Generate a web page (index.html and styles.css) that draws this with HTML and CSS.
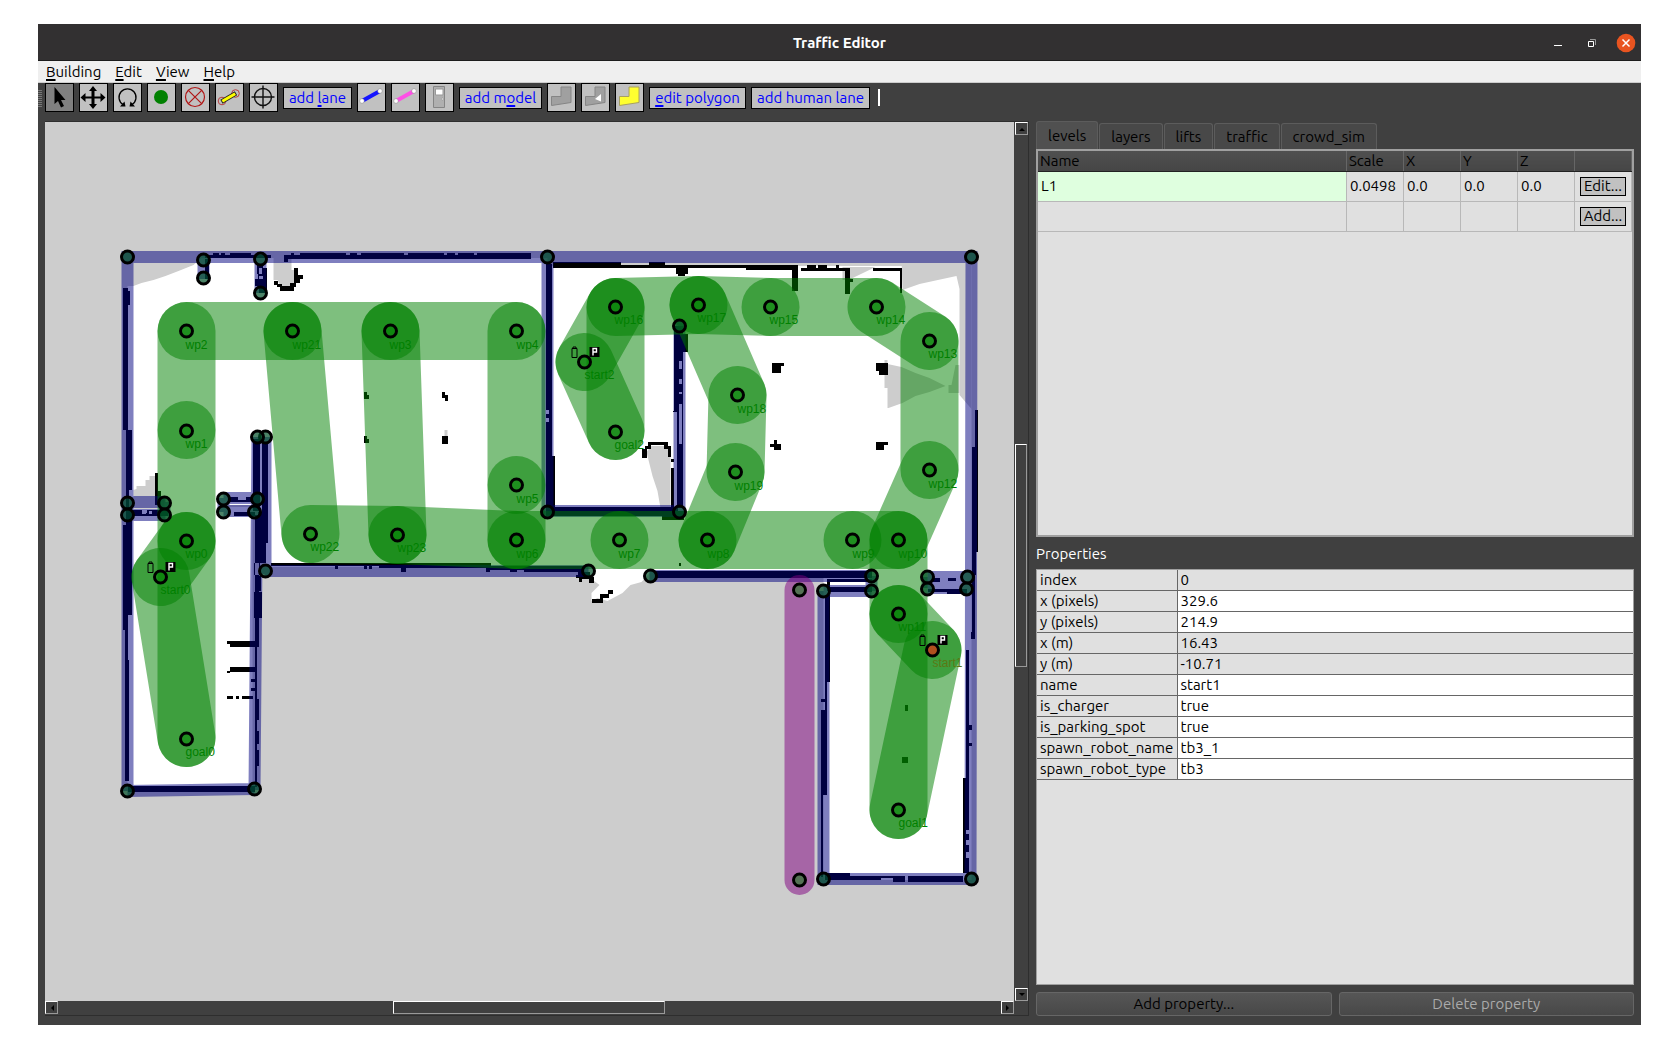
FILE: index.html
```html
<!DOCTYPE html>
<html lang="en">
<head>
<meta charset="utf-8">
<title>Traffic Editor</title>
<link rel="stylesheet" href="styles.css">
</head>
<body>
<div class="window">
  <header class="titlebar">
    <h1 class="title">Traffic Editor</h1>
    <div class="window-controls">
      <button class="control" aria-label="Minimize"><svg width="20" height="20" viewBox="0 0 20 20"><path d="M6 12.500h8" stroke="#fff"/></svg></button>
      <button class="control" aria-label="Restore"><svg width="20" height="20" viewBox="0 0 20 20" fill="none"><path d="M6.500 8.500h5v5h-5z" stroke="#fff"/><path d="M8 6.500h5.500v5.500" stroke="#999"/></svg></button>
      <button class="control" aria-label="Close"><svg width="20" height="20" viewBox="0 0 20 20"><circle cx="10" cy="10" r="9.300" fill="#e95420"/><path d="M6.500 6.500l7 7m0-7l-7 7" stroke="#fff" stroke-width="1.500"/></svg></button>
    </div>
  </header>
  <nav class="menubar">
    <button class="menu"><u>B</u>uilding</button>
    <button class="menu"><u>E</u>dit</button>
    <button class="menu"><u>V</u>iew</button>
    <button class="menu"><u>H</u>elp</button>
  </nav>
  <div class="toolbar" role="toolbar">
    <span class="grip"></span>
    <button class="tool active" aria-label="Select"><svg viewBox="0 0 27 27"><path d="M8.500 3v17l3.500-3 3 6.500 3-1.500-3-6h4.500z"/></svg></button>
    <button class="tool" aria-label="Move"><svg viewBox="0 0 27 27"><path d="M13 2l4 5h-2.500v5.500h6V9l5 4.500-5 4.500v-3.500h-6V20H17l-4 5-4-5h2.500v-5.500h-6V18l-5-4.500 5-4.500v3.500h6V7H9z"/></svg></button>
    <button class="tool" aria-label="Rotate"><svg viewBox="0 0 27 27"><path d="M9 20.500a8.500 8.500 0 1 1 9 0" fill="none" stroke="#000" stroke-width="1.300"/><path d="M6 22.500l5.500 0-1-5zM21 22.500l-5.500 0 1-5z"/></svg></button>
    <button class="tool" aria-label="Add vertex"><svg viewBox="0 0 27 27"><circle cx="13" cy="13" r="7" fill="#008000"/></svg></button>
    <button class="tool" aria-label="Delete"><svg viewBox="0 0 27 27" fill="none" stroke="#b01515" stroke-width="1.200"><circle cx="13" cy="13" r="9.500"/><path d="M6.300 6.300l13.400 13.400m0-13.400L6.300 19.700"/></svg></button>
    <button class="tool" aria-label="Add fiducial"><svg viewBox="0 0 27 27"><g fill="none" stroke="#b84040"><circle cx="6" cy="17" r="3.800"/><circle cx="19.500" cy="9.500" r="3.800"/></g><path d="M5.500 17.800L20 9.200" stroke="#222" stroke-width="4.500"/><path d="M6.300 17.300L19.200 9.700" stroke="#ff0" stroke-width="3"/></svg></button>
    <button class="tool" aria-label="Add constraint"><svg viewBox="0 0 27 27" fill="none" stroke="#111" stroke-width="1.400"><circle cx="13" cy="13" r="8.500"/><path d="M13 1.500v23M1.500 13h23"/></svg></button>
    <button class="text-tool">add <u>l</u>ane</button>
    <button class="tool" aria-label="Add wall"><svg viewBox="0 0 27 27"><path d="M4 17L22 7" stroke="#1414ff" stroke-width="4"/><g fill="#fff" stroke="#888" stroke-width=".500"><circle cx="4" cy="17" r="2.300"/><circle cx="22" cy="7" r="2.300"/></g></svg></button>
    <button class="tool" aria-label="Add measurement"><svg viewBox="0 0 27 27"><path d="M4 17L22 7" stroke="#ff50e6" stroke-width="4"/><g fill="#fff" stroke="#888" stroke-width=".500"><circle cx="4" cy="17" r="2.300"/><circle cx="22" cy="7" r="2.300"/></g></svg></button>
    <button class="tool" aria-label="Add door"><svg viewBox="0 0 27 27"><path d="M7.500 2.500h11v21h-11z" fill="#b0b0b0" stroke="#858585"/><path d="M9.500 5h7.500v6h-7.500z" fill="#fff" stroke="#999"/><circle cx="16.500" cy="15" r="1" fill="#eee" stroke="#888" stroke-width=".500"/></svg></button>
    <button class="text-tool wide">add m<u>o</u>del</button>
    <button class="tool" aria-label="Add floor"><svg viewBox="0 0 27 27"><path d="M3.500 12.500h9.500V3h10v15.500L3.500 21.500z" fill="#a0a0a0" stroke="#858585"/></svg></button>
    <button class="tool" aria-label="Add hole"><svg viewBox="0 0 27 27"><path d="M3.500 12.500h9.500V3h10v15.500L3.500 21.500z" fill="#a0a0a0" stroke="#858585"/><path d="M13 15l6-5v7.500z" fill="#fff"/></svg></button>
    <button class="tool" aria-label="Add zone"><svg viewBox="0 0 27 27"><path d="M3.500 12.500h9.500V3h10v15.500L3.500 21.500z" fill="#ffff30" stroke="#a8a060"/></svg></button>
    <button class="text-tool wider"><u>e</u>dit polygon</button>
    <button class="text-tool widest">add human lane</button>
    <span class="caret"></span>
  </div>
  <main class="workspace">
    <section class="viewport" aria-label="Map">
      <svg class="map" viewBox="46 122 968 879">
        <defs>
          <circle id="node" r="6"/>
          <g id="parking"><path d="M5-15h10v10H5z"/><path d="M8.500-6.500v-7h3.500v3.500H8.500" fill="none" stroke="#fff" stroke-width="1.400"/></g>
          <path id="battery" d="M-12.500-13.500h5v9h-5zM-11.500-13.500v-1.500h3v1.500" fill="none" stroke="#000"/>
        </defs>
        <g class="floor">
          <path d="M128 286h6l8-3 12-3 12-4 13-5 15-6 8-7H972V880H824V571H652l-10 11-11 3-8 8-15 8-10-3-6 3v-8l8-8-12-9-4-9H265V515h-12v271H128z"/>
        </g>
        <g class="unknown">
          <path d="M274 258h18v12h4v10l-4 8h-10l-4-8h-4z"/>
          <path d="M647 452l5-6h14l5 6v56h-10l-3-17-5-15z"/>
          <path d="M885 360h3v4l14 3 14 6 14 5 16 8-16 6-14 4-13 7-14 5h-1v-20h-3zM956 365h4v28h-11v-8h3z"/>
          <path d="M445 430h3v7h-3zM876 267l-27 13h-6v-13zM902 258h70v151l-12-14V289l-3-13-14 3-23 5-17 6z"/>
          <path d="M548 257h424v9H548zM134 490l3-1v-3h9v-6h4v-4h7v22h-23z"/>
          <path d="M128 497h37v12h-37zM224 505h30v2h-30z"/>
        </g>
        <g class="scan">
          <path d="M205 255h8v-2h6v2h2v-2h4v2h5v-2h21v2h20v3h-66zM284 255h7v-2h3v2h6v-2h46v2h4v-2h7v2h4v-2h43v2h4v-2h36v2h3v-2h8v2h3v-2h16v2h3v-2h54v6H288v3h-3z"/>
          <path d="M123 288h5v3h2v14h-2v125h4v60h-3v19h1v3h3v3h-1v100h-4v45h1v121h-4V630h-2V525h3v-95h-3z"/>
          <path d="M205 259h4v20h-4zM257 264h6v4h4v25h-8v-7h-4v-7h3v-5h-1zM295 268h3v7h5v4h-3v4h-4v4h-2v4h-14v-4h-3v-2h-3v-4h4v3h4v2h8v-3h4z"/>
          <path d="M442 392h3v3h3v6h-3v-3h-3zM364 392h3v3h2v4h-5zM364 436h3v3h2v4h-5zM442 436h6v8h-6zM155 473h3v18h3v14h-6z"/>
          <path d="M253 439h7v72h-7zM262 442h6v101h-2v20h-8v-51h4zM255 515h4v125h-4zM254 575h6v-12h-6z"/>
          <path d="M255 576h6v15h-6zM254 592h8v26h-8zM255 634h4v13h-4zM255 647h2v140h-2zM251 679h4v3h-4zM251 688h4v3h-4zM256 699h3v21h-3zM256 731h3v13h-3zM256 750h3v16h-3z"/>
          <path d="M130 510h12v3h5v-3h21v6h-38zM230 497h8v3h8v-3h8v5h-24zM234 512h21v4h-21z"/>
          <path d="M271 563h220v3h93v6h-60v-2h-7v2h-7v-2h-20v2h-4v-4h-80v4h-5v-4h-22v-2H271zM335 566h3v3h-3zM364 566h3v3h-3zM369 566h3v3h-3z"/>
          <path d="M227 641h29v6h-26v-3h-3zM227 671h3v-4h25v5h-25v1h-3zM227 696h6v3h-6zM236 696h3v3h-3zM242 696h11v3h-11z"/>
          <path d="M128 786h127v6H128z"/>
          <path d="M546 264h6v192h3v51h123v9H546zM553 262h68v3h28v-3h16v3h132v5h-51v-2H553zM676 267h12v7h-3v2h-7v-2h-2zM792 265h6v26h-6zM801 268h6v-3h9v3h2v-3h9v3h9v-3h3v3h11v26h-5v-23h-44zM850 279h3v3h-3zM873 268h29v25h-2v-22h-27z"/>
          <path d="M675 326h8v182h-6V412h-3zM683 334h5v18h-5zM642 458v-9h3v-3h3v-4h20v4h3v11h-3v-8h-4v-4h-13v4h-4v9zM671 468h3v44h-3zM671 459h3v3h-3z"/>
          <path d="M772 363h12v3h-3v7h-9zM876 363h12v12h-9v-4h-3zM770 444h4v-4h3v4h4v6h-7v-3h-4zM876 442h12v3h-4v5h-8zM662 511h22v9h-22z"/>
          <path d="M975 410h3v133h-3zM972 447h4v128h-4zM976 543h2v9h-2z"/>
          <path d="M578 572h12v5h4v6h-5v-4h-7v3h-3v-4h-3v-3h2zM608 590h5v4h-4v4h-6v5h-11v-4h8v-5h8z"/>
          <path d="M656 571h216v7H656zM827 579h45v3h-42v9h-3zM828 587h44v5h-44zM932 578h8v4h-8zM948 578h8v3h-8zM928 589h39v5h-20v-2h-19z"/>
          <path d="M825 595h5v87h-3v113h-4v82h-2V710h4zM966 650h3v223h-3zM963 778h4v95h-4zM825 873h25v3h55v6h-12v-4h-12v2h-56zM895 876h9v3h-9zM908 876h55v6h-55zM972 575h3v58h-3z"/>
          <path d="M905 705h3v6h-3zM902 757h6v6h-6zM679 563h2v3h-2zM969 725h3v5h-3zM969 743h3v3h-3zM971 632h4v7h-4zM821 699h4v3h-4z"/>
        </g>
        <g class="specks">
          <path d="M259 268h3v6h-3zM259 276h4v3h-4zM546 410h3v4h-3zM546 418h3v4h-3zM679 361h3v8h-3zM679 379h3v5h-3zM679 392h3v2h-3zM679 404h3v40h-3zM142 511h4v3h-4zM149 511h3v3h-3zM966 830h3v4h-3zM966 840h3v5h-3zM966 852h3v6h-3z"/>
        </g>
        <g class="walls">
          <path d="M122 257h856M128 257v534M204 257v22M261 257v36M548 257v255M542 511h144M680 512V326M972 257l-1 628M128 502h38M128 515h38M165 502v14M224 498h34M224 511h31M224 498v14M258 437l-3 353M266 437v137M265 571h324M128 791l127-2M650 576h222M872 576v15M872 591h-48M824 591v294M824 879h148M928 577h40M928 588h40M928 577v11"/>
        </g>
        <path class="measure" d="M800 590v290"/>
        <g class="lanes">
          <path d="M187 331H293"/><path d="M293 331H391"/><path d="M391 331H517"/>
          <path d="M187 331V430"/><path d="M187 430V541"/><path d="M187 541L161 577"/><path d="M161 577L187 738"/><path d="M187 541V738"/>
          <path d="M293 331L311 534"/><path d="M391 331L398 535"/><path d="M517 331V485"/><path d="M517 485V540"/>
          <path d="M311 534L398 535"/><path d="M398 535L517 540"/><path d="M517 540H620"/><path d="M620 540H708"/><path d="M708 540H853"/><path d="M853 540H899"/>
          <path d="M899 540V614"/><path d="M899 540L930 470"/><path d="M930 470V341"/><path d="M930 341L877 307"/><path d="M877 307H771"/><path d="M771 307L699 305"/><path d="M699 305L616 307"/>
          <path d="M699 305L738 395"/><path d="M738 395L736 472"/><path d="M736 472L708 540"/>
          <path d="M616 307L585 362"/><path d="M585 362L616 431"/><path d="M616 307V431"/>
          <path d="M899 614L933 650"/><path d="M933 650L899 810"/><path d="M899 614V810"/>
        </g>
        <g class="corners">
          <use href="#node" x="128" y="257"/><use href="#node" x="204" y="260"/><use href="#node" x="204" y="278"/><use href="#node" x="261" y="259"/><use href="#node" x="261" y="293"/><use href="#node" x="548" y="257"/><use href="#node" x="972" y="257"/>
          <use href="#node" x="266" y="437"/><use href="#node" x="258" y="437"/><use href="#node" x="128" y="503"/><use href="#node" x="128" y="515"/><use href="#node" x="165" y="503"/><use href="#node" x="165" y="515"/>
          <use href="#node" x="224" y="499"/><use href="#node" x="224" y="512"/><use href="#node" x="258" y="499"/><use href="#node" x="255" y="512"/><use href="#node" x="548" y="512"/><use href="#node" x="680" y="512"/><use href="#node" x="680" y="326"/>
          <use href="#node" x="266" y="571"/><use href="#node" x="589" y="571"/><use href="#node" x="651" y="576"/><use href="#node" x="128" y="791"/><use href="#node" x="255" y="789"/>
          <use href="#node" x="824" y="591"/><use href="#node" x="872" y="576"/><use href="#node" x="872" y="591"/><use href="#node" x="928" y="577"/><use href="#node" x="928" y="589"/><use href="#node" x="968" y="577"/><use href="#node" x="967" y="589"/><use href="#node" x="824" y="879"/><use href="#node" x="972" y="879"/>
          <use href="#node" class="measure-end" x="800" y="590"/><use href="#node" class="measure-end" x="800" y="880"/>
        </g>
        <g class="waypoints">
          <use href="#node" x="187" y="331"/><use href="#node" x="293" y="331"/><use href="#node" x="391" y="331"/><use href="#node" x="517" y="331"/><use href="#node" x="187" y="431"/><use href="#node" x="517" y="485"/><use href="#node" x="311" y="534"/><use href="#node" x="398" y="535"/><use href="#node" x="517" y="540"/><use href="#node" x="187" y="541"/><use href="#node" x="161" y="577"/><use href="#node" x="187" y="739"/>
          <use href="#node" x="616" y="307"/><use href="#node" x="699" y="305"/><use href="#node" x="771" y="307"/><use href="#node" x="877" y="307"/><use href="#node" x="930" y="341"/><use href="#node" x="585" y="362"/><use href="#node" x="616" y="432"/><use href="#node" x="738" y="395"/><use href="#node" x="736" y="472"/><use href="#node" x="930" y="470"/><use href="#node" x="620" y="540"/><use href="#node" x="708" y="540"/><use href="#node" x="853" y="540"/><use href="#node" x="899" y="540"/><use href="#node" x="899" y="614"/><use href="#node" x="899" y="810"/>
          <use href="#node" class="selected" x="933" y="650"/>
        </g>
        <use href="#battery" x="161" y="577"/><use href="#parking" x="161" y="577"/>
        <use href="#battery" x="585" y="362"/><use href="#parking" x="585" y="362"/>
        <use href="#battery" x="933" y="650"/><use href="#parking" x="933" y="650"/>
        <g class="labels">
          <text x="186" y="349">wp2</text><text x="293" y="349">wp21</text><text x="390" y="349">wp3</text><text x="517" y="349">wp4</text><text x="186" y="448">wp1</text><text x="517" y="503">wp5</text><text x="311" y="551">wp22</text><text x="398" y="552">wp23</text><text x="517" y="558">wp6</text><text x="186" y="558">wp0</text><text x="161" y="594">start0</text><text x="186" y="756">goal0</text>
          <text x="615" y="324">wp16</text><text x="698" y="322">wp17</text><text x="770" y="324">wp15</text><text x="877" y="324">wp14</text><text x="929" y="358">wp13</text><text x="585" y="379">start2</text><text x="615" y="449">goal2</text><text x="738" y="413">wp18</text><text x="735" y="490">wp19</text><text x="929" y="488">wp12</text><text x="619" y="558">wp7</text><text x="708" y="558">wp8</text><text x="853" y="558">wp9</text><text x="899" y="558">wp10</text><text x="899" y="631">wp11</text><text x="899" y="827">goal1</text>
          <text class="selected-label" x="933" y="667">start1</text>
        </g>
      </svg>
      <div class="scrollbar vertical">
        <button class="arrow" aria-label="Scroll up"><svg width="8" height="4" viewBox="0 0 8 4"><path d="M1 4l3-3 3 3z"/></svg></button>
        <div class="track"><span class="thumb"></span></div>
        <button class="arrow" aria-label="Scroll down"><svg width="8" height="4" viewBox="0 0 8 4"><path d="M1 0l3 3 3-3z"/></svg></button>
      </div>
      <div class="scrollbar horizontal">
        <button class="arrow" aria-label="Scroll left"><svg width="4" height="8" viewBox="0 0 4 8"><path d="M4 1L1 4l3 3z"/></svg></button>
        <div class="track"><span class="thumb"></span></div>
        <button class="arrow" aria-label="Scroll right"><svg width="4" height="8" viewBox="0 0 4 8"><path d="M0 1l3 3-3 3z"/></svg></button>
      </div>
    </section>
    <aside class="side">
      <div class="tabs" role="tablist">
        <button class="tab current" role="tab" aria-selected="true">levels</button>
        <button class="tab" role="tab">layers</button>
        <button class="tab" role="tab">lifts</button>
        <button class="tab" role="tab">traffic</button>
        <button class="tab" role="tab">crowd_sim</button>
      </div>
      <div class="pane levels-pane">
        <table class="levels">
          <colgroup><col><col class="num"><col class="num"><col class="num"><col class="num"><col class="num"></colgroup>
          <thead><tr><th>Name</th><th>Scale</th><th>X</th><th>Y</th><th>Z</th><th></th></tr></thead>
          <tbody>
            <tr><td class="active-level">L1</td><td>0.0498</td><td>0.0</td><td>0.0</td><td>0.0</td><td class="action"><button class="cell-button">Edit...</button></td></tr>
            <tr><td></td><td></td><td></td><td></td><td></td><td class="action"><button class="cell-button">Add...</button></td></tr>
          </tbody>
        </table>
      </div>
      <h2 class="heading">Properties</h2>
      <div class="pane properties-pane">
        <table class="properties">
          <colgroup><col class="key"><col></colgroup>
          <tbody>
            <tr><th scope="row">index</th><td class="locked">0</td></tr>
            <tr><th scope="row">x (pixels)</th><td>329.6</td></tr>
            <tr><th scope="row">y (pixels)</th><td>214.9</td></tr>
            <tr><th scope="row">x (m)</th><td class="locked">16.43</td></tr>
            <tr><th scope="row">y (m)</th><td class="locked">-10.71</td></tr>
            <tr><th scope="row">name</th><td>start1</td></tr>
            <tr><th scope="row">is_charger</th><td>true</td></tr>
            <tr><th scope="row">is_parking_spot</th><td>true</td></tr>
            <tr><th scope="row">spawn_robot_name</th><td>tb3_1</td></tr>
            <tr><th scope="row">spawn_robot_type</th><td>tb3</td></tr>
          </tbody>
        </table>
      </div>
      <div class="actions">
        <button class="action-button">Add property...</button>
        <button class="action-button" disabled>Delete property</button>
      </div>
    </aside>
  </main>
</div>
</body>
</html>
```
FILE: styles.css
```css
* { box-sizing: border-box; }

body {
  margin: 0;
  padding: 24px 39px 25px 38px;
  height: 100vh;
  background: #fff;
  font: 15px/20px Ubuntu, "Noto Sans", sans-serif;
  color: #000;
}

button {
  margin: 0;
  padding: 0;
  border: 0;
  background: none;
  font: inherit;
  color: inherit;
  white-space: nowrap;
}

svg { display: block; }
u { text-decoration-thickness: 2px; text-underline-offset: 2px; }

.window {
  display: flex;
  flex-direction: column;
  height: 100%;
  background: #404040;
}

.titlebar {
  display: grid;
  grid-template-columns: 1fr auto 1fr;
  align-items: center;
  height: 37px;
  padding: 1px 5px 0;
  background: #323031;
  border-bottom: 1px solid #1c1c1c;
  color: #fff;
}
.title { grid-column: 2; margin: 0; font-size: 15px; font-weight: 700; }
.window-controls { display: flex; justify-content: flex-end; gap: 14px; }

.menubar {
  display: flex;
  gap: 14px;
  height: 22px;
  padding: 0 8px;
  background: #efefef;
  border-bottom: 1px solid #ccc;
}

.toolbar { display: flex; align-items: center; gap: 5px; height: 29px; }
.grip {
  width: 4px;
  height: 18px;
  margin-right: -2px;
  background: repeating-linear-gradient(#404040 0 1px, #777 1px 2px);
}
.tool {
  flex: none;
  width: 29px;
  height: 29px;
  background: #c1c1c1;
  border: 1px solid #000;
}
.tool.active { background: #808080; }
.text-tool {
  flex: none;
  width: 69px;
  height: 22px;
  background: #c1c1c1;
  border: 1px solid #000;
  color: #00f;
}
.text-tool.wide { width: 83px; }
.text-tool.wider { width: 97px; }
.text-tool.widest { width: 119px; }
.caret { width: 2px; height: 17px; margin-left: 3px; background: #fff; }

.workspace {
  display: grid;
  grid-template-columns: minmax(0, 1fr) 598px;
  gap: 7px;
  flex: 1;
  min-height: 0;
  padding: 9px 7px 9px;
}

.viewport {
  display: grid;
  grid-template-columns: minmax(0, 1fr) 14px;
  grid-template-rows: minmax(0, 1fr) 14px;
  border: 1px solid #2e2e2e;
  border-left: 0;
  min-height: 0;
}
.map { width: 100%; height: 100%; background: #cdcdcd; }
.floor { fill: #fff; }
.unknown { fill: #cdcdcd; }
.scan { fill: #000; shape-rendering: crispEdges; }
.specks { fill: #fff; shape-rendering: crispEdges; }
.walls { fill: none; stroke: #000080; stroke-width: 12; opacity: .5; }
.measure { stroke: #800080; stroke-width: 30; stroke-linecap: round; opacity: .5; }
.lanes path { stroke: #008000; stroke-width: 58; stroke-linecap: round; opacity: .5; }
.corners, .waypoints { fill: rgba(0, 128, 0, .5); stroke: #000; stroke-width: 3; }
.corners { fill: rgba(0, 80, 40, .7); }
.measure-end { fill: #557255; }
.selected { fill: #b0501e; }
.labels { font: 12px "Liberation Sans", sans-serif; fill: #008000; }
.selected-label { fill: #5c7814; }

.scrollbar { display: flex; }
.vertical { flex-direction: column; padding: 0 1px; }
.arrow {
  display: flex;
  align-items: center;
  justify-content: center;
  flex: none;
  width: 13px;
  height: 13px;
  border: 1px solid;
  border-color: #fff #999 #999 #fff;
}
.track { display: grid; flex: 1; }
.vertical .track { grid-template-rows: 308fr 222fr 320fr; }
.horizontal .track { grid-template-columns: 335fr 271fr 336fr; padding-bottom: 1px; }
.thumb { border: 1px solid; border-color: #fff #999 #999 #fff; }
.vertical .thumb { grid-row: 2; }
.horizontal .thumb { grid-column: 2; }

.side { display: flex; flex-direction: column; min-height: 0; }
.tabs { display: flex; align-items: flex-end; gap: 1px; height: 28px; }
.tab {
  height: 26px;
  padding: 0 11px;
  background: #484848;
  border: 1px solid #5c5c5c;
  border-bottom: 0;
  border-radius: 3px 3px 0 0;
}
.tab.current { height: 28px; background: #505050; }

.pane { background: #e0e0e0; border: 1px solid #a0a0a0; }
.levels-pane { flex: 386 1 0; border-width: 2px; }
.properties-pane { flex: 417 1 0; }

table { width: 100%; border-collapse: collapse; table-layout: fixed; }
th { font-weight: 400; text-align: left; }

.levels th {
  height: 20px;
  padding: 1px 2px 0;
  line-height: 18px;
  background: linear-gradient(#505050, #464646);
  border-right: 1px solid #666;
  border-bottom: 1px solid #222;
}
.levels td {
  height: 30px;
  padding: 0 3px;
  border-right: 1px solid #b8b8b8;
  border-bottom: 1px solid #b8b8b8;
}
.levels .active-level { background: #dfffdf; }
.num { width: 57px; }
.levels .action { padding: 0 5px; }
.cell-button {
  display: block;
  width: 46px;
  height: 19px;
  line-height: 16px;
  background: #c1c1c1;
  border: 1px solid #000;
}

.heading { margin: 7px 0 5px; font-size: 15px; font-weight: 400; line-height: 20px; color: #fff; }

.properties th, .properties td {
  height: 21px;
  padding: 0 3px;
  line-height: 20px;
  border-bottom: 1px solid #666;
}
.properties th { border-right: 1px solid #666; }
.properties td { background: #fff; }
.properties .locked { background: #e0e0e0; }
.key { width: 140px; }

.actions { display: grid; grid-template-columns: 1fr 1fr; gap: 7px; margin-top: 7px; }
.action-button {
  height: 24px;
  background: linear-gradient(#565656, #484848);
  border: 1px solid #666;
  border-radius: 3px;
}
.action-button:disabled { color: #aaa; }
```
